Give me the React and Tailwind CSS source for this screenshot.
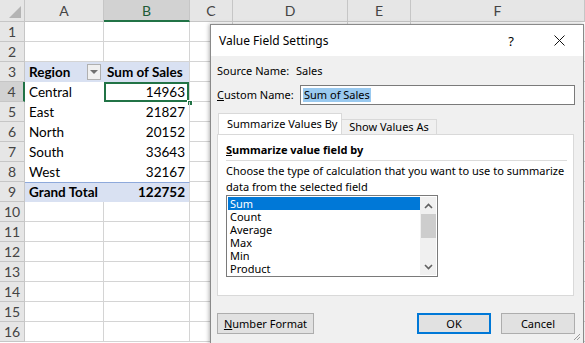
import React from "react";

const cols = ["A", "B", "C", "D", "E", "F"];
const colW = ["w-[79px]", "w-[86px]", "w-[43px]", "w-[115px]", "w-[63px]", "flex-1"];

const pivot = {
  3: { a: "Region", b: "Sum of Sales", head: true },
  4: { a: "Central", b: "14963" },
  5: { a: "East", b: "21827" },
  6: { a: "North", b: "20152" },
  7: { a: "South", b: "33643" },
  8: { a: "West", b: "32167" },
  9: { a: "Grand Total", b: "122752", total: true },
};

function Chevron({ up }) {
  return (
    <svg width="9" height="6" viewBox="0 0 9 6">
      <path d={up ? "M1 5 L4.5 1.5 L8 5" : "M1 1 L4.5 4.5 L8 1"} fill="none" stroke="#606060" strokeWidth="1.6" />
    </svg>
  );
}

function Sheet() {
  const rows = Array.from({ length: 16 }, (_, i) => i + 1);
  return (
    <div className="flex flex-col w-full text-[13.5px] text-black whitespace-nowrap" style={{ fontFamily: "Lato, 'Liberation Sans', sans-serif" }}>
      <div className="flex h-[22px] bg-[#e6e6e6] text-[#444] text-[14px]">
        <div className="w-[25px] h-full border-r border-b border-[#c6c6c6] relative">
          <svg className="absolute right-[3px] bottom-[3px]" width="12" height="12" viewBox="0 0 12 12">
            <path d="M12 0 L12 12 L0 12 Z" fill="#b4b4b4" />
          </svg>
        </div>
        {cols.map((c, i) => (
          <div
            key={c}
            className={`${colW[i]} h-full flex items-center justify-center border-r border-[#c6c6c6] ${
              c === "B" ? "bg-[#d2d2d2] border-b-2 border-b-[#217346] text-[#1e5b37]" : "border-b"
            }`}
          >
            {c}
          </div>
        ))}
      </div>
      {rows.map((r) => {
        const p = pivot[r];
        const sel = r === 4;
        return (
          <div key={r} className="flex h-[20px]">
            <div
              className={`w-[25px] h-full flex items-center justify-center border-b border-[#c6c6c6] text-[#444] text-[14px] ${
                sel ? "bg-[#d2d2d2] border-r-2 border-r-[#217346] text-[#1e5b37]" : "bg-[#e6e6e6] border-r"
              }`}
            >
              {r}
            </div>
            {p ? (
              <>
                <div
                  className={`w-[79px] h-full flex items-center pl-[4px] ${
                    p.head || p.total ? "bg-[#d9e1f2] font-bold" : "bg-white"
                  } ${p.total ? "border-t border-[#8ea9db]" : ""}`}
                >
                  {p.a}
                  {p.head && (
                    <div className="ml-auto mr-[3px] w-[14px] h-[16px] bg-[#f0f0f0] border border-[#b0b0b0] flex items-center justify-center">
                      <svg width="8" height="5" viewBox="0 0 8 5">
                        <path d="M0 0 L8 0 L4 4 Z" fill="#707070" />
                      </svg>
                    </div>
                  )}
                </div>
                <div
                  className={`w-[86px] h-full flex items-center border-r border-[#d4d4d4] relative ${
                    p.head ? "justify-start pl-[3px] bg-[#d9e1f2] font-bold" : "justify-end pr-[4px]"
                  } ${p.total ? "bg-[#d9e1f2] font-bold border-t border-t-[#8ea9db]" : ""}`}
                >
                  {p.b}
                  {sel && (
                    <>
                      <div className="absolute left-0 top-0 right-0 bottom-0 border-2 border-[#217346]" />
                      <div className="absolute right-[-4px] bottom-[-4px] w-[6px] h-[6px] bg-[#217346] border border-white" />
                    </>
                  )}
                </div>
              </>
            ) : (
              <>
                <div className="w-[79px] h-full border-r border-b border-[#d4d4d4]" />
                <div className="w-[86px] h-full border-r border-b border-[#d4d4d4]" />
              </>
            )}
            <div className="w-[43px] h-full border-r border-b border-[#d4d4d4]" />
            <div className="w-[115px] h-full border-r border-b border-[#d4d4d4]" />
            <div className="w-[63px] h-full border-r border-b border-[#d4d4d4]" />
            <div className="flex-1 h-full border-b border-[#d4d4d4]" />
          </div>
        );
      })}
    </div>
  );
}

function Dialog() {
  const items = ["Sum", "Count", "Average", "Max", "Min", "Product"];
  return (
    <div
      className="absolute left-[210px] top-[24px] w-[374px] h-[320px] bg-[#f0f0f0] border border-[#8a8a8a] shadow-[-1px_0_4px_rgba(0,0,0,0.3)] flex flex-col text-[11px] leading-[16px] text-black whitespace-nowrap"
      style={{ fontFamily: "'Segoe UI', 'Noto Sans', sans-serif" }}
    >
      <div className="h-[31px] bg-white flex items-center pl-[8px] shrink-0">
        <span className="text-[12px]">Value Field Settings</span>
        <span className="ml-auto mr-[40px] text-[13px]">?</span>
        <svg className="mr-[18px]" width="11" height="11" viewBox="0 0 11 11">
          <path d="M0.5 0.5 L10.5 10.5 M10.5 0.5 L0.5 10.5" stroke="#111" strokeWidth="1" />
        </svg>
      </div>
      <div className="flex flex-col px-[6px]">
        <div className="flex items-center h-[16px] mt-[7px]">
          <div className="w-[79px] shrink-0">Source Name:</div>
          <div>Sales</div>
        </div>
        <div className="flex items-center mt-[6px]">
          <div className="w-[83px] shrink-0">
            <u>C</u>ustom Name:
          </div>
          <div className="w-[275px] h-[20px] bg-white border border-[#7a7a7a] flex items-center pl-[2px]">
            <span className="bg-[#99c9ef] leading-[14px] px-[1px]">Sum of Sales</span>
          </div>
        </div>
        <div className="flex items-end mt-[9px] h-[20px] pl-[1px] relative z-10">
          <div className="w-[124px] h-[21px] bg-white border border-b-0 border-[#d9d9d9] flex items-center pl-[8px]">
            Summarize Values By
          </div>
          <div className="w-[95px] h-[15px] bg-[#f0f0f0] border border-l-0 border-b-0 border-[#d9d9d9] flex items-center justify-center">
            Show Values As
          </div>
        </div>
        <div className="w-[357px] h-[162px] bg-white border border-[#d9d9d9] px-[8px] pt-[8px] flex flex-col">
          <div className="font-bold h-[14px] flex items-center">
            <span>
              <u>S</u>ummarize value field by
            </span>
          </div>
          <div className="h-px bg-[#dcdcdc] mt-[3px] mr-[-2px]" />
          <div className="mt-[2px] leading-[16px]">
            <div>Choose the type of calculation that you want to use to summarize</div>
            <div>data from the selected field</div>
          </div>
          <div className="mt-0 w-[212px] h-[82px] border border-[#7a7a7a] flex p-[1px]">
            <div className="flex-1 flex flex-col">
              {items.map((it, i) => (
                <div
                  key={it}
                  className={`h-[13px] leading-[13px] pl-[2px] ${i === 0 ? "bg-[#0078d7] text-white" : ""}`}
                >
                  {it}
                </div>
              ))}
            </div>
            <div className="w-[16px] bg-[#f0f0f0] flex flex-col items-center">
              <div className="h-[17px] flex items-center justify-center">
                <Chevron up />
              </div>
              <div className="w-[15px] h-[24px] bg-[#cdcdcd]" />
              <div className="flex-1" />
              <div className="h-[17px] flex items-center justify-center">
                <Chevron />
              </div>
            </div>
          </div>
        </div>
        <div className="flex items-center mt-[17px]">
          <div className="w-[97px] h-[21px] bg-[#e1e1e1] border border-[#adadad] flex items-center justify-center">
            <span>
              <u>N</u>umber Format
            </span>
          </div>
          <div className="ml-auto w-[74px] h-[21px] bg-[#e1e1e1] border-2 border-[#0078d7] flex items-center justify-center">
            OK
          </div>
          <div className="ml-[10px] mr-[2px] w-[74px] h-[21px] bg-[#e1e1e1] border border-[#adadad] flex items-center justify-center">
            Cancel
          </div>
        </div>
      </div>
      <svg className="absolute right-[2px] bottom-[2px]" width="8" height="8" viewBox="0 0 8 8">
        <path d="M7 1 L1 7 M7 4 L4 7" stroke="#9a9a9a" strokeWidth="1" />
      </svg>
    </div>
  );
}

export default function App() {
  return (
    <div className="relative w-[585px] h-[343px] overflow-hidden bg-white">
      <Sheet />
      <Dialog />
    </div>
  );
}
